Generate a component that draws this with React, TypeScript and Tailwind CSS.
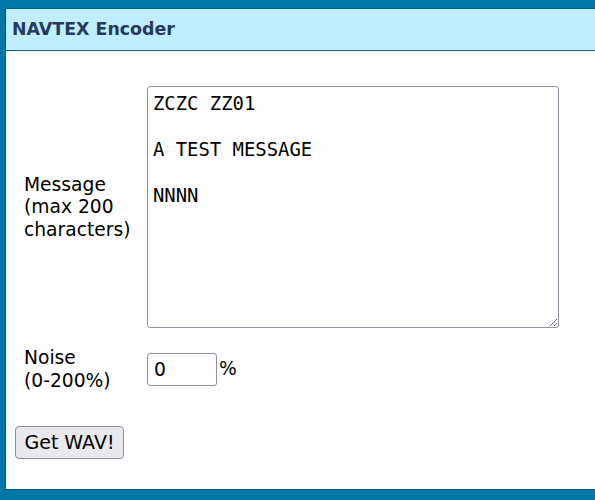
export default function App() {
    return (
        <div className="h-[500px] overflow-hidden bg-[#0077a6] pt-[8px] pl-[5px] font-['DejaVu_Sans',sans-serif]">
            <div className="w-[620px] h-[482px] border border-[#00618a] bg-white">
                <div className="h-[42px] bg-[#c0eefe] border-b border-[#00618a] flex items-center pl-[6px] text-[17.4px] font-bold text-[#263a5c]">
                    NAVTEX Encoder
                </div>

                <div className="pt-[35px] pl-[9px] text-[18.7px] leading-[22.5px] text-black">
                    <div className="flex items-center">
                        <div className="w-[132px] pl-[9px] pt-[1px]">
                            Message
                            <br />
                            (max 200
                            <br />
                            characters)
                        </div>
                        <textarea
                            defaultValue={'ZCZC ZZ01\n\nA TEST MESSAGE\n\nNNNN'}
                            className="w-[412px] h-[242px] border border-[#8f8f9d] rounded-[3px] px-[5px] pt-[5px] font-['DejaVu_Sans_Mono',monospace] text-[18.9px] leading-[23px] text-black outline-none"
                        />
                    </div>

                    <div className="flex items-center mt-[18px]">
                        <div className="w-[132px] pl-[9px] pt-[1px]">
                            Noise
                            <br />
                            (0-200%)
                        </div>
                        <input
                            type="text"
                            defaultValue="0"
                            className="w-[70px] h-[33px] border border-[#8f8f9d] rounded-[3px] px-[6px] text-[18.7px] text-black outline-none"
                        />
                        <span className="ml-[2px]">%</span>
                    </div>

                    <button
                        type="button"
                        className="mt-[34px] w-[109px] h-[33px] bg-[#e9e9ed] border border-[#8f8f9d] rounded-[4px] text-[19px] text-black"
                    >
                        Get WAV!
                    </button>
                </div>
            </div>
        </div>
    );
}
